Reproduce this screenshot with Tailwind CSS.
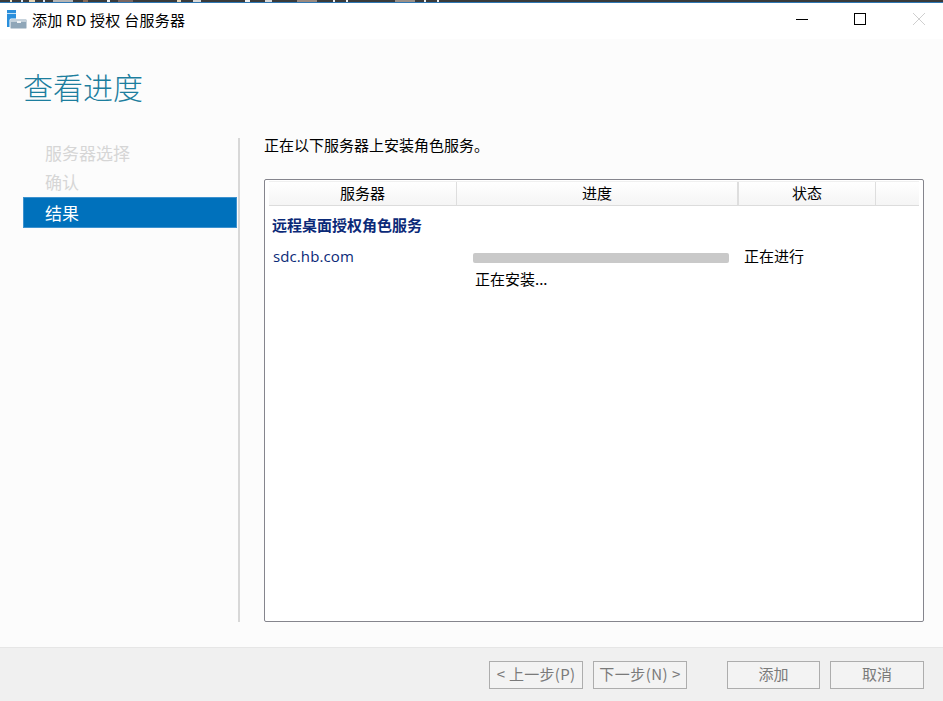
<!DOCTYPE html>
<html lang="zh-CN">
<head>
<meta charset="utf-8">
<script src="https://cdn.jsdelivr.net/npm/@tailwindcss/browser@4"></script>
</head>
<body class="w-[943px] h-[701px] overflow-hidden bg-white font-['Noto_Sans_CJK_SC','Noto_Sans',sans-serif] text-[15px] text-black">
<div class="flex h-[701px] flex-col">
  <div class="flex h-[2px] shrink-0 bg-[#3a3a3a]">
    <i class="ml-[10px] w-[2px] bg-[#f3e2c0]"></i><i class="ml-[9px] w-[2px] bg-[#dfe7f0]"></i><i class="ml-[6px] w-[6px] bg-[#e8d5b5]"></i><i class="ml-[8px] w-[2px] bg-[#dfe7f0]"></i><i class="ml-[8px] w-[20px] bg-[#b5b5b5]"></i><i class="ml-[10px] w-[5px] bg-[#8a6a55]"></i><i class="ml-[19px] w-[3px] bg-[#f0f0f0]"></i><i class="ml-[8px] w-[15px] bg-[#7a6660]"></i><i class="ml-[44px] w-[4px] bg-[#e8d5b5]"></i><i class="ml-[12px] w-[8px] bg-[#d8d8d8]"></i><i class="ml-[44px] w-[5px] bg-[#f0f0f0]"></i><i class="ml-[15px] w-[7px] bg-[#d8d8d8]"></i><i class="ml-[25px] w-[20px] bg-[#9a8a80]"></i><i class="ml-[16px] w-[2px] bg-[#f0f0f0]"></i><i class="ml-[11px] w-[2px] bg-[#f0f0f0]"></i><i class="ml-[47px] w-[20px] bg-[#9a9088]"></i><i class="ml-[9px] w-[2px] bg-[#f0f0f0]"></i><i class="ml-[11px] w-[2px] bg-[#f0f0f0]"></i>
  </div>
  <div class="flex h-[37px] shrink-0 items-center border-t border-t-[#2f78b5] bg-white pb-[4px]">
    <svg class="ml-[7px] mr-[5px] mt-[2px] h-[20px] w-[20px] shrink-0" viewBox="0 0 20 20"><rect x="0" y="0" width="9" height="17" fill="#2a8fdc"/><rect x="0" y="3" width="9" height="1" fill="#bfe0f5"/><rect x="3" y="9" width="17" height="10" rx="1" fill="#8fa6b8" stroke="#fff" stroke-width="1"/><rect x="4" y="10" width="15" height="2" fill="#c3d0da"/><rect x="10" y="11" width="4" height="2" fill="#eef2f5"/></svg>
    <span class="text-[15px] tracking-[0.25px] leading-none">添加 RD 授权 台服务器</span>
    <div class="ml-auto flex items-center">
      <svg class="mr-[46px] h-[12px] w-[12px]" viewBox="0 0 12 12"><path d="M0 6.5H12" stroke="#000" fill="none"/></svg>
      <svg class="mr-[47px] h-[12px] w-[12px]" viewBox="0 0 12 12"><rect x=".5" y=".5" width="11" height="11" stroke="#000" fill="none"/></svg>
      <svg class="mr-[18px] h-[12px] w-[12px]" viewBox="0 0 12 12"><path d="M0 0L12 12M12 0L0 12" stroke="#cfcfcf" fill="none"/></svg>
    </div>
  </div>
  <div class="flex min-h-0 flex-1 flex-col bg-[#fcfcfc]">
    <h1 class="ml-[23px] mt-[27px] h-[40px] text-[30px] leading-[40px] font-light text-[#1c7e9e]">查看进度</h1>
    <div class="mt-[32px] flex h-[484px]">
      <nav class="ml-[23px] w-[214px] text-[17px]">
        <div class="flex h-[29px] items-center pl-[22px] text-[#d6d6d6]">服务器选择</div>
        <div class="flex h-[30px] items-center pl-[22px] text-[#d6d6d6]">确认</div>
        <div class="flex h-[31px] items-center border border-[#3d92cf] bg-[#0071bc] pl-[21px] text-white">结果</div>
      </nav>
      <div class="ml-[1px] w-[2px] bg-[#d8d8d8]"></div>
      <main class="ml-[24px] w-[660px]">
        <p class="h-[41px] leading-[13px]">正在以下服务器上安装角色服务。</p>
        <div class="h-[443px] rounded-[2px] border border-[#85858d] bg-white px-[4px] pt-[1px]">
          <div class="flex h-[25px] w-[650px] border-y border-t-[#f0f0f0] border-b-[#dcdcdc] bg-gradient-to-b from-white to-[#f5f5f5]">
            <div class="flex w-[188px] items-center justify-center border-r border-[#dedede]">服务器</div>
            <div class="flex w-[282px] items-center justify-center border-r-2 border-[#dedede]">进度</div>
            <div class="flex w-[137px] items-center justify-center border-r border-[#dedede]">状态</div>
          </div>
          <div class="ml-[3px] mt-[10px] h-[18px] text-[15px] font-bold leading-[18px] text-[#0b2a78]">远程桌面授权角色服务</div>
          <div class="mt-[12px] flex h-[20px] items-center">
            <span class="ml-[4px] w-[200px] font-['Open_Sans','Noto_Sans',sans-serif] text-[15px] tracking-[0.1px] leading-[20px] text-[#0b2a78]">sdc.hb.com</span>
            <div class="mt-[4px] h-[10px] w-[256px] rounded-[2px] bg-[#c9c9c9]"></div>
            <span class="ml-[15px] leading-[20px]">正在进行</span>
          </div>
          <div class="ml-[206px] mt-[3px] leading-[20px]">正在安装...</div>
        </div>
      </main>
    </div>
    <footer class="mt-auto flex h-[54px] items-start border-t border-[#e6e6e6] bg-[#f0f0f0] pt-[13px] text-[15px] text-[#7a7a7a]">
      <div class="ml-[489px] flex h-[28px] w-[94px] items-center justify-center whitespace-pre border border-[#adadad] bg-[#f3f3f3] pb-[2px] tracking-[0.3px]">&lt; 上一步(P)</div>
      <div class="ml-[10px] flex h-[28px] w-[94px] items-center justify-center whitespace-pre border border-[#adadad] bg-[#f3f3f3] pb-[2px] tracking-[0.5px]">下一步(N) &gt;</div>
      <div class="ml-[40px] flex h-[28px] w-[93px] items-center justify-center border border-[#adadad] bg-[#f3f3f3] pb-[2px]">添加</div>
      <div class="ml-[10px] flex h-[28px] w-[94px] items-center justify-center border border-[#adadad] bg-[#f3f3f3] pb-[2px]">取消</div>
    </footer>
  </div>
</div>
</body>
</html>
